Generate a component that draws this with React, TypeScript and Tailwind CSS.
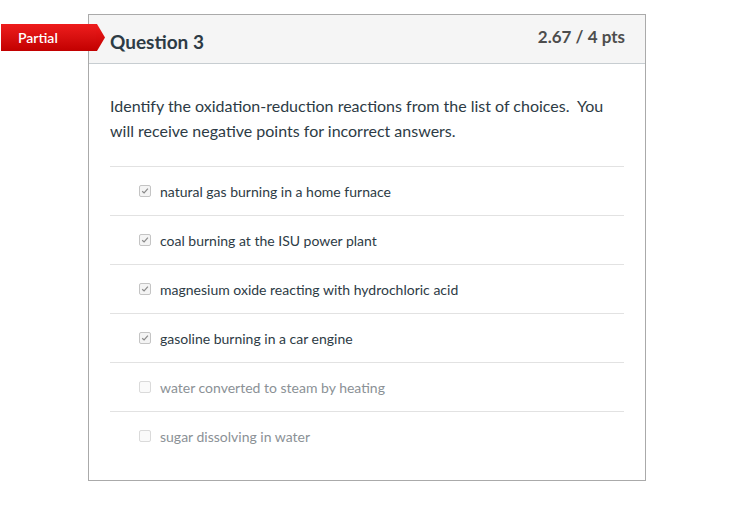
import React from "react";

const answers = [
  { text: "natural gas burning in a home furnace", checked: true },
  { text: "coal burning at the ISU power plant", checked: true },
  { text: "magnesium oxide reacting with hydrochloric acid", checked: true },
  { text: "gasoline burning in a car engine", checked: true },
  { text: "water converted to steam by heating", checked: false },
  { text: "sugar dissolving in water", checked: false },
];

function Box({ checked }: { checked: boolean }) {
  return (
    <span
      className={
        checked
          ? "flex h-[12px] w-[12px] items-center justify-center rounded-[2px] border border-[#c4c4c4] bg-[#f4f4f4]"
          : "flex h-[12px] w-[12px] items-center justify-center rounded-[2px] border border-[#dadada] bg-[#fafafa]"
      }
    >
      {checked && (
        <svg width="8" height="8" viewBox="0 0 8 8">
          <path d="M1.2 4.2 L3.1 6 L6.9 1.6" fill="none" stroke="#8a8a8a" strokeWidth="1.2" />
        </svg>
      )}
    </span>
  );
}

export default function App() {
  return (
    <div className="min-h-[518px] w-[746px] bg-white pl-[88px] pt-[14px]" style={{ fontFamily: "Lato, 'Noto Sans', sans-serif" }}>
      <div className="relative w-[558px] border border-[#aaaaaa]">
        <div className="absolute left-[-88px] top-[9px] flex h-[27px] items-center">
          <div className="flex h-[27px] w-[95px] items-center bg-gradient-to-b from-[#ee1c1c] to-[#c20000] pl-[17px] text-[14px] font-semibold text-white">
            Partial
          </div>
          <svg width="9" height="27" viewBox="0 0 9 27" className="block">
            <defs>
              <linearGradient id="g" x1="0" y1="0" x2="0" y2="1">
                <stop offset="0" stopColor="#ee1c1c" />
                <stop offset="1" stopColor="#c20000" />
              </linearGradient>
            </defs>
            <path d="M0 0 L1 0 L9 13.5 L1 27 L0 27 Z" fill="url(#g)" />
          </svg>
        </div>
        <div className="flex h-[49px] justify-between border-b border-[#c7cdd1] bg-[#f5f5f5] pl-[21px] pr-[20px]">
          <div className="pt-[15px] text-[19px] font-bold leading-[24px] text-[#2d3b45]">Question 3</div>
          <div className="pt-[10px] text-[17px] font-bold leading-[24px] text-[#4d4d4d]">2.67 / 4 pts</div>
        </div>
        <div className="px-[21px] pb-[20px] pt-[29px]">
          <p className="mb-[23px] text-[16px] leading-[25px] text-[#2d3b45]">
            Identify the oxidation-reduction reactions from the list of choices.&nbsp; You will receive negative points for incorrect answers.
          </p>
          <div>
            {answers.map((a) => (
              <div key={a.text} className="flex h-[49px] items-center gap-[9px] border-t border-[#e2e2e2] pl-[29px]">
                <Box checked={a.checked} />
                <span className={a.checked ? "text-[14px] text-[#2d3b45]" : "text-[14px] text-[#8b9196]"}>{a.text}</span>
              </div>
            ))}
          </div>
        </div>
      </div>
    </div>
  );
}
